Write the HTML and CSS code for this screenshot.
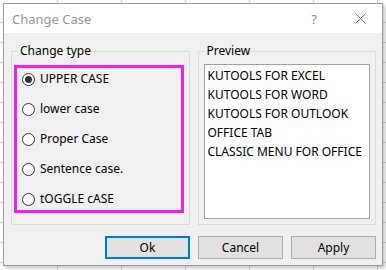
FILE: index.html
```html
<!DOCTYPE html>
<html lang="en">
<head>
  <meta charset="UTF-8" />
  <title>Change Case</title>
  <link rel="stylesheet" href="styles.css">
</head>
<body>
  <div class="dialog">
    <div class="titlebar">
      <span class="title">Change Case</span>
      <span class="help">?</span>
      <svg class="close" width="11" height="11" viewBox="0 0 11 11">
        <path d="M0.5 0.5 L10.5 10.5 M10.5 0.5 L0.5 10.5" stroke="#7a7a7a" stroke-width="1" fill="none"/>
      </svg>
    </div>

    <div class="content">
      <div class="groups">
        <fieldset class="group">
          <legend>Change type</legend>
          <div class="highlight">
            <label class="option"><span class="radio checked"></span>UPPER CASE</label>
            <label class="option"><span class="radio"></span>lower case</label>
            <label class="option"><span class="radio"></span>Proper Case</label>
            <label class="option"><span class="radio"></span>Sentence case.</label>
            <label class="option"><span class="radio"></span>tOGGLE cASE</label>
          </div>
        </fieldset>

        <fieldset class="group">
          <legend>Preview</legend>
          <div class="listbox">
            <div>KUTOOLS FOR EXCEL</div>
            <div>KUTOOLS FOR WORD</div>
            <div>KUTOOLS FOR OUTLOOK</div>
            <div>OFFICE TAB</div>
            <div>CLASSIC MENU FOR OFFICE</div>
          </div>
        </fieldset>
      </div>

      <div class="buttons">
        <button class="btn default">Ok</button>
        <button class="btn">Cancel</button>
        <button class="btn">Apply</button>
      </div>
    </div>
  </div>
</body>
</html>
```

FILE: styles.css
```css
* {
  box-sizing: border-box;
}

body {
  margin: 0;
  width: 386px;
  height: 270px;
  overflow: hidden;
  font-family: 'Noto Sans', 'Segoe UI', sans-serif;
  font-size: 12px;
  color: #000;
  background-color: #fff;
  background-image:
    repeating-linear-gradient(90deg, transparent 0 57px, #d4d4d4 57px 58px, transparent 58px 64px),
    repeating-linear-gradient(180deg, transparent 0 19px, #d4d4d4 19px 20px);
  background-position: 0 0, 0 3px;
  padding: 3px 0 0 3px;
}

.dialog {
  width: 380px;
  height: 263px;
  border: 1px solid #9c9c9c;
  background: #f0f0f0;
  box-shadow: 2px 2px 4px rgba(0, 0, 0, 0.25);
  display: flex;
  flex-direction: column;
}

.titlebar {
  height: 29px;
  background: #fff;
  display: flex;
  align-items: center;
  padding: 0 0 0 8px;
}

.title {
  color: #999;
  font-size: 13px;
  flex: 1;
}

.help {
  color: #8c8c8c;
  font-size: 13px;
  margin-right: 38px;
}

.close {
  margin-right: 16px;
}

.content {
  flex: 1;
  padding: 10px 6px 0 7px;
}

.groups {
  display: flex;
  gap: 8px;
}

.group {
  width: 179px;
  height: 182px;
  margin: 0;
  padding: 0;
  border: 1px solid #dcdcdc;
  min-width: 0;
}

.group legend {
  margin-left: 6px;
  padding: 0 2px;
  line-height: 16px;
  height: 16px;
}

.highlight {
  margin: 6px 5px 0 2px;
  height: 148px;
  border: 3px solid #f01ef0;
  padding: 3px 0 0 5px;
  display: flex;
  flex-direction: column;
  gap: 14px;
}

.option {
  display: flex;
  align-items: center;
  height: 16px;
  line-height: 16px;
}

.radio {
  width: 13px;
  height: 13px;
  border: 1px solid #333;
  border-radius: 50%;
  background: #fff;
  margin-right: 5px;
  display: flex;
  align-items: center;
  justify-content: center;
}

.radio.checked::after {
  content: "";
  width: 7px;
  height: 7px;
  border-radius: 50%;
  background: #333;
}

.listbox {
  margin: 5px 5px 0 5px;
  height: 155px;
  background: #fff;
  border: 1px solid #a0a0a0;
  padding: 1px 3px;
  line-height: 19px;
}

.buttons {
  display: flex;
  justify-content: flex-end;
  gap: 8px;
  margin-top: 11px;
}

.btn {
  width: 85px;
  height: 23px;
  font-family: inherit;
  font-size: 12px;
  color: #000;
  background: #e1e1e1;
  border: 1px solid #adadad;
  padding: 0;
}

.btn.default {
  border: 2px solid #0078d7;
}
```
